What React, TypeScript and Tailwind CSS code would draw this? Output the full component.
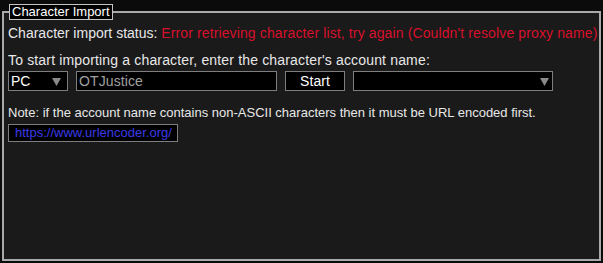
import React from "react";

const Arrow = () => (
  <svg width="9" height="9" viewBox="0 0 9 9" className="shrink-0">
    <polygon points="0,1 9,1 4.5,9" fill="#8a8a8a" />
  </svg>
);

export default function App() {
  return (
    <div
      className="h-[263px] w-[603px] overflow-hidden bg-[#0b0b0b] pl-[2px] pt-[4px] text-[14px] text-[#e8e8e8]"
      style={{ fontFamily: '"Liberation Sans", Arial, sans-serif' }}
    >
      <fieldset className="h-[257px] w-[599px] min-w-0 overflow-hidden border-2 border-[#a9a9a9] bg-[#1a1a1a] pl-[4px] pr-[2px]">
        <legend className="ml-[1px] border border-[#c4c4c4] bg-black px-[2px] text-[13px] leading-[14px] text-white">
          Character Import
        </legend>

        <div className="mt-[5px] whitespace-nowrap leading-[16px]">
          Character import status:{" "}
          <span className="tracking-[0.12px] text-[#d8102c]">Error retrieving character list, try again (Couldn't resolve proxy name)</span>
        </div>

        <div className="mt-[11px] whitespace-nowrap leading-[16px] tracking-[0.16px]">
          To start importing a character, enter the character's account name:
        </div>

        <div className="mt-[3px] flex items-center gap-[8px]">
          <div className="flex h-[20px] w-[60px] items-center justify-between border border-[#7e7e7e] bg-black pl-[2px] pr-[6px] text-white">
            <span>PC</span>
            <Arrow />
          </div>
          <div className="flex h-[20px] w-[201px] items-center border border-[#7e7e7e] bg-black pl-[2px] tracking-[0.1px] text-[#a0a0a0]">
            OTJustice
          </div>
          <div className="flex h-[20px] w-[60px] items-center justify-center border border-[#7e7e7e] bg-black tracking-[0.1px] text-white">
            Start
          </div>
          <div className="flex h-[20px] w-[200px] items-center justify-end border border-[#7e7e7e] bg-black pr-[3px]">
            <Arrow />
          </div>
        </div>

        <div className="mt-[14px] whitespace-nowrap text-[13px] leading-[15px]">
          Note: if the account name contains non-ASCII characters then it must be URL encoded first.
        </div>

        <div className="mt-[4px] flex">
          <a className="flex h-[18px] items-center border border-[#7e7e7e] bg-black pl-[6px] pr-[5px] text-[13px] text-[#3a3ae8]" href="#">
            https://www.urlencoder.org/
          </a>
        </div>
      </fieldset>
    </div>
  );
}
